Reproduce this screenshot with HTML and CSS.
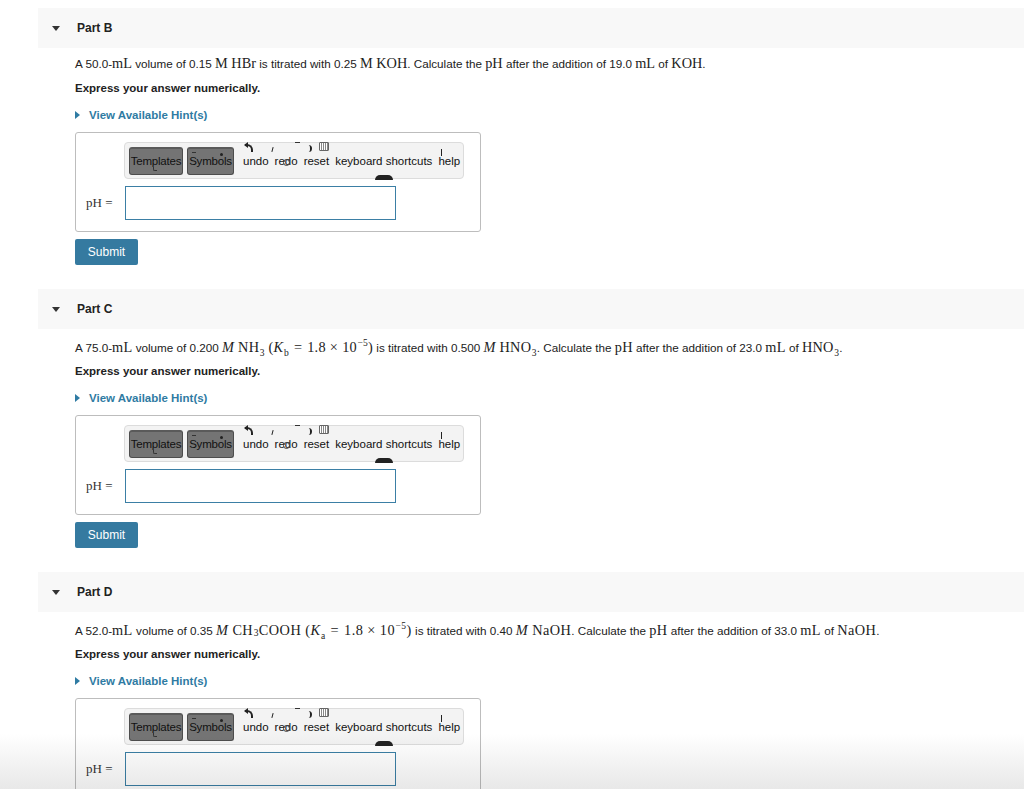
FILE: index.html
```html
<!DOCTYPE html>
<html>
<head>
<meta charset="utf-8">
<link rel="stylesheet" href="styles.css">
</head>
<body>
<div class="page">

  <section class="part">
    <div class="part-header"><span class="caret"></span><span class="part-title">Part B</span></div>
    <div class="part-body">
      <p class="problem">A 50.0-<span class="m">mL</span> volume of 0.15 <span class="m">M HBr</span> is titrated with 0.25 <span class="m">M KOH</span>. Calculate the <span class="m">pH</span> after the addition of 19.0 <span class="m">mL</span> of <span class="m">KOH</span>.</p>
      <p class="instr">Express your answer numerically.</p>
      <div class="hint"><span class="hint-caret"></span>View Available Hint(s)</div>
      <div class="answer-box">
        <div class="toolbar">
          <span class="tbtn tbtn-t">Tem<span class="glyph g-p">p</span>lates</span>
          <span class="tbtn tbtn-s">Symb<span class="glyph g-o">o</span>ls</span>
          <span class="tlink l-undo">undo</span>
          <span class="tlink l-redo">redo</span>
          <span class="tlink l-reset">reset</span>
          <span class="tlink l-kb">keyboard shortcuts</span>
          <span class="tlink l-help">help</span>
        </div>
        <div class="answer-row"><span class="label">pH =</span><div class="input"></div></div>
      </div>
      <button class="submit">Submit</button>
    </div>
  </section>

  <section class="part">
    <div class="part-header"><span class="caret"></span><span class="part-title">Part C</span></div>
    <div class="part-body">
      <p class="problem tall">A 75.0-<span class="m">mL</span> volume of 0.200 <span class="m"><i>M</i> NH<sub>3</sub> (<i>K</i><sub>b</sub><span class="rel">=</span>1.8<span class="bin">×</span>10<sup>−5</sup>)</span> is titrated with 0.500 <span class="m"><i>M</i> HNO<sub>3</sub></span>. Calculate the <span class="m">pH</span> after the addition of 23.0 <span class="m">mL</span> of <span class="m">HNO<sub>3</sub></span>.</p>
      <p class="instr">Express your answer numerically.</p>
      <div class="hint"><span class="hint-caret"></span>View Available Hint(s)</div>
      <div class="answer-box">
        <div class="toolbar">
          <span class="tbtn tbtn-t">Tem<span class="glyph g-p">p</span>lates</span>
          <span class="tbtn tbtn-s">Symb<span class="glyph g-o">o</span>ls</span>
          <span class="tlink l-undo">undo</span>
          <span class="tlink l-redo">redo</span>
          <span class="tlink l-reset">reset</span>
          <span class="tlink l-kb">keyboard shortcuts</span>
          <span class="tlink l-help">help</span>
        </div>
        <div class="answer-row"><span class="label">pH =</span><div class="input"></div></div>
      </div>
      <button class="submit">Submit</button>
    </div>
  </section>

  <section class="part">
    <div class="part-header"><span class="caret"></span><span class="part-title">Part D</span></div>
    <div class="part-body">
      <p class="problem tall wide">A 52.0-<span class="m">mL</span> volume of 0.35 <span class="m"><i>M</i> CH<sub class="low">3</sub>COOH (<i>K</i><sub>a</sub><span class="rel">=</span>1.8<span class="bin">×</span>10<sup>−5</sup>)</span> is titrated with 0.40 <span class="m"><i>M</i> NaOH</span>. Calculate the <span class="m">pH</span> after the addition of 33.0 <span class="m">mL</span> of <span class="m">NaOH</span>.</p>
      <p class="instr">Express your answer numerically.</p>
      <div class="hint"><span class="hint-caret"></span>View Available Hint(s)</div>
      <div class="answer-box">
        <div class="toolbar">
          <span class="tbtn tbtn-t">Tem<span class="glyph g-p">p</span>lates</span>
          <span class="tbtn tbtn-s">Symb<span class="glyph g-o">o</span>ls</span>
          <span class="tlink l-undo">undo</span>
          <span class="tlink l-redo">redo</span>
          <span class="tlink l-reset">reset</span>
          <span class="tlink l-kb">keyboard shortcuts</span>
          <span class="tlink l-help">help</span>
        </div>
        <div class="answer-row"><span class="label">pH =</span><div class="input"></div></div>
      </div>
      <button class="submit">Submit</button>
    </div>
  </section>

</div>
<div class="fade"></div>
</body>
</html>
```

FILE: styles.css
```css
html, body {
  margin: 0;
  padding: 0;
  background: #fff;
}
body {
  font-family: "Liberation Sans", Arial, sans-serif;
  color: #222;
  font-size: 11.5px;
}
.page {
  padding: 8px 0 0 38px;
}
.part {
  margin-bottom: 24px;
}
.part-header {
  height: 40px;
  background: #f8f8f8;
  display: flex;
  align-items: center;
  padding-left: 14px;
}
.caret {
  width: 0;
  height: 0;
  border-left: 4px solid transparent;
  border-right: 4px solid transparent;
  border-top: 5px solid #333;
  margin-right: 17px;
  margin-top: 1px;
}
.part-title {
  font-weight: bold;
  font-size: 12px;
  color: #222;
}
.part-body {
  padding-left: 37px;
}
.problem {
  margin: 6px 0 0 0;
  line-height: 18px;
  font-size: 11.7px;
  color: #222;
  white-space: nowrap;
}
.problem.tall {
  margin-top: 9px;
}
.problem.tall + .instr {
  margin-top: 5px;
}
.m {
  font-family: "Liberation Serif", "Times New Roman", serif;
  font-size: 14.3px;
}
.tall .m {
  letter-spacing: 0.25px;
}
.tall.wide .m {
  letter-spacing: 0.45px;
}
.m i {
  font-style: italic;
}
.m sub, .m sup {
  font-size: 9.5px;
  line-height: 0;
  margin-left: 0.5px;
}
.m sub.low {
  vertical-align: -1px;
}
.rel {
  margin: 0 5px;
}
.bin {
  margin: 0 4px;
}
.instr {
  margin: 6px 0 0 0;
  font-weight: bold;
  font-size: 11.5px;
  line-height: 18px;
}
.hint {
  margin-top: 9px;
  display: flex;
  align-items: center;
  color: #2f7ba3;
  font-weight: bold;
  font-size: 11.5px;
  line-height: 18px;
}
.hint-caret {
  width: 0;
  height: 0;
  border-top: 4px solid transparent;
  border-bottom: 4px solid transparent;
  border-left: 5px solid #2f7ba3;
  margin: 0 9px 0 0;
}
.answer-box {
  margin-top: 8px;
  width: 404px;
  border: 1px solid #bdbdbd;
  border-radius: 3px;
  padding: 9px 0 11px 0;
  box-sizing: content-box;
}
.toolbar {
  margin-left: 48px;
  background: #f3f3f3;
  border: 1px solid #dcdcdc;
  border-radius: 4px;
  display: flex;
  align-items: center;
  padding-left: 4px;
  box-sizing: border-box;
  width: 340px;
  height: 37px;
  white-space: nowrap;
}
.tbtn {
  position: relative;
  flex-shrink: 0;
  height: 28px;
  box-sizing: border-box;
  background: #747474;
  border: 1px solid #4d4d4d;
  border-top: 2px solid #5a5a5a;
  border-radius: 3px;
  color: #111;
  font-size: 11.5px;
  letter-spacing: -0.2px;
  display: flex;
  align-items: center;
  justify-content: center;
  margin-right: 4px;
}
.tbtn-t { width: 54px; }
.tbtn-s { width: 47px; margin-right: 9px; }
.glyph { position: relative; }
.g-p::after {
  content: "";
  position: absolute;
  left: 1px;
  bottom: -4px;
  width: 3px;
  height: 3px;
  border-left: 1px solid #333;
  border-bottom: 1px solid #333;
  border-radius: 0 0 0 2px;
}
.g-o::before {
  content: "";
  position: absolute;
  left: 2px;
  top: -2px;
  width: 3px;
  height: 3px;
  background: #222;
  border-radius: 50%;
}
.tbtn-s::before {
  content: "";
  position: absolute;
  left: 4px;
  top: 3px;
  width: 4px;
  height: 1px;
  background: #333;
}
.tlink {
  position: relative;
  flex-shrink: 0;
  white-space: nowrap;
  font-size: 11.5px;
  color: #111;
  margin-right: 6px;
}
.l-undo::before {
  content: "";
  position: absolute;
  left: 2px;
  top: -11px;
  width: 6px;
  height: 6px;
  border-top: 2px solid #222;
  border-right: 2px solid #222;
  border-radius: 0 6px 0 0;
}
.l-undo::after {
  content: "";
  position: absolute;
  left: 1px;
  top: -13px;
  border-top: 3px solid transparent;
  border-bottom: 3px solid transparent;
  border-right: 4px solid #222;
}
.l-redo::before {
  content: "";
  position: absolute;
  left: -3px;
  top: -8px;
  width: 1px;
  height: 5px;
  background: #222;
  transform: rotate(15deg);
}
.l-redo::after {
  content: "";
  position: absolute;
  left: 8px;
  top: 4px;
  width: 5px;
  height: 5px;
  border: 1px solid #444;
  border-radius: 50%;
}
.l-reset::before {
  content: "";
  position: absolute;
  left: -9px;
  top: -13px;
  width: 5px;
  height: 1px;
  background: #333;
}
.l-reset::after {
  content: "";
  position: absolute;
  left: 1px;
  top: -10px;
  width: 5px;
  height: 7px;
  border-right: 2px solid #222;
  border-radius: 0 5px 5px 0;
}
.l-kb::before {
  content: "";
  position: absolute;
  left: -16px;
  top: -13px;
  width: 8px;
  height: 7px;
  border: 1px solid #666;
  background: repeating-linear-gradient(90deg, #fff 0 1px, #888 1px 2px);
  border-radius: 1px;
}
.l-kb::after {
  content: "";
  position: absolute;
  left: 40px;
  bottom: -13px;
  width: 18px;
  height: 5px;
  background: #222;
  border-radius: 9px 9px 0 0;
}
.l-help {
  margin-right: 0;
}
.l-help::before {
  content: "";
  position: absolute;
  left: 3px;
  top: -6px;
  width: 1px;
  height: 7px;
  background: #222;
}
.answer-row {
  display: flex;
  align-items: center;
  margin-top: 7px;
  padding-left: 10px;
}
.label {
  font-family: "Liberation Serif", "Times New Roman", serif;
  font-size: 13px;
  color: #333;
  width: 39px;
}
.input {
  width: 271px;
  height: 34px;
  box-sizing: border-box;
  border: 1px solid #3b7fa5;
  background: #fff;
}
.submit {
  display: block;
  margin-top: 7px;
  width: 63px;
  height: 26px;
  background: #357aa0;
  color: #fff;
  border: none;
  border-radius: 2px;
  font-family: "Liberation Sans", Arial, sans-serif;
  font-size: 12px;
  padding: 0;
}
.fade {
  position: fixed;
  left: 0;
  right: 0;
  bottom: 0;
  height: 55px;
  background: linear-gradient(to bottom, #ffffff 0%, #e8e8e8 100%);
  mix-blend-mode: multiply;
  pointer-events: none;
}
```
